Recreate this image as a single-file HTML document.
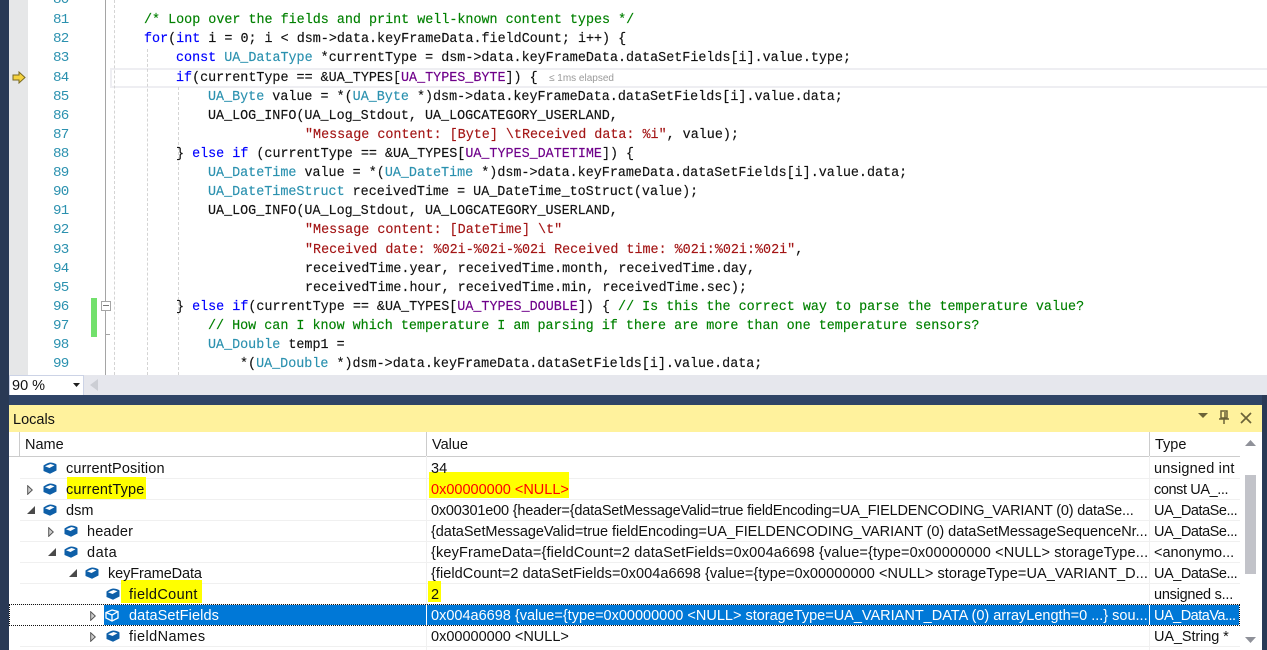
<!DOCTYPE html>
<html><head><meta charset="utf-8"><style>
html,body{margin:0;padding:0}
body{width:1267px;height:650px;overflow:hidden;position:relative;background:#fff}
div,span.a,svg{position:absolute}
.code{font:13.4px/19px "Liberation Mono",monospace;white-space:pre;color:#111;left:0;height:19px;margin-top:1px;-webkit-text-stroke:.15px}
.n{font:14.2px/19px "Liberation Mono",monospace;letter-spacing:-.8px;color:#2b91af;left:53px;height:19px;margin-top:1px}
.k{color:#0000ff}.t{color:#2b91af}.s{color:#a31515}.c{color:#008000}.m{color:#6f008a}
.u{font:14.5px/21px "Liberation Sans",sans-serif;white-space:nowrap;color:#111;height:21px;margin-top:1px}
.r{left:20px;width:1220px;height:1px;background:#f0f0f0}
</style></head><body>
<div style="left:0;top:0;width:9px;height:650px;background:#293955"></div>
<div style="left:9px;top:0;width:19px;height:375px;background:#e6e7e8"></div>
<div style="left:105px;top:0;width:1px;height:375px;background:#a5a5a5"></div>
<div style="left:110px;top:68px;width:1157px;height:16px;border:2px solid #eeeef2;border-right:0"></div>
<div style="left:114px;top:0;height:375px;border-left:1px dashed #d4d4d4"></div>
<div style="left:147px;top:49px;height:326px;border-left:1px dashed #d4d4d4"></div>
<div style="left:178px;top:87px;height:288px;border-left:1px dashed #d4d4d4"></div>
<div style="left:91px;top:298px;width:6px;height:39px;background:#72e06c"></div>
<div style="left:101px;top:301px;width:8px;height:8px;border:1px solid #a5a5a5;background:#fff"></div>
<div style="left:103px;top:305px;width:6px;height:1px;background:#777"></div>
<div style="left:106px;top:334px;width:4px;height:1px;background:#a5a5a5"></div>
<svg style="left:12px;top:71px" width="14" height="13" viewBox="0 0 14 13"><path d="M1 4H7V1L13 6.500 7 12V9H1Z" fill="#f5d33f" stroke="#7a6a20" stroke-width="1"/></svg>

<div class="n" style="top:-10px">80</div><div class="code" style="top:-10px"></div>
<div class="n" style="top:10px">81</div><div class="code" style="top:10px;left:144px"><span class="c">/* Loop over the fields and print well-known content types */</span></div>
<div class="n" style="top:29px">82</div><div class="code" style="top:29px;left:144px"><span class="k">for</span>(<span class="k">int</span> i = 0; i &lt; dsm-&gt;data.keyFrameData.fieldCount; i++) {</div>
<div class="n" style="top:48px">83</div><div class="code" style="top:48px;left:176px"><span class="k">const</span> <span class="t">UA_DataType</span> *currentType = dsm-&gt;data.keyFrameData.dataSetFields[i].value.type;</div>
<div class="n" style="top:68px">84</div><div class="code" style="top:68px;left:176px"><span class="k">if</span>(currentType == &amp;UA_TYPES[<span class="m">UA_TYPES_BYTE</span>]) {</div>
<div class="u" style="left:549px;top:68px;font-size:10px;line-height:20px;color:#9a9a9a">≤ 1ms elapsed</div>
<div class="n" style="top:87px">85</div><div class="code" style="top:87px;left:208px"><span class="t">UA_Byte</span> value = *(<span class="t">UA_Byte</span> *)dsm-&gt;data.keyFrameData.dataSetFields[i].value.data;</div>
<div class="n" style="top:106px">86</div><div class="code" style="top:106px;left:208px">UA_LOG_INFO(UA_Log_Stdout, UA_LOGCATEGORY_USERLAND,</div>
<div class="n" style="top:125px">87</div><div class="code" style="top:125px;left:305px"><span class="s">"Message content: [Byte] \tReceived data: %i"</span>, value);</div>
<div class="n" style="top:144px">88</div><div class="code" style="top:144px;left:176px">} <span class="k">else</span> <span class="k">if</span> (currentType == &amp;UA_TYPES[<span class="m">UA_TYPES_DATETIME</span>]) {</div>
<div class="n" style="top:163px">89</div><div class="code" style="top:163px;left:208px"><span class="t">UA_DateTime</span> value = *(<span class="t">UA_DateTime</span> *)dsm-&gt;data.keyFrameData.dataSetFields[i].value.data;</div>
<div class="n" style="top:182px">90</div><div class="code" style="top:182px;left:208px"><span class="t">UA_DateTimeStruct</span> receivedTime = UA_DateTime_toStruct(value);</div>
<div class="n" style="top:201px">91</div><div class="code" style="top:201px;left:208px">UA_LOG_INFO(UA_Log_Stdout, UA_LOGCATEGORY_USERLAND,</div>
<div class="n" style="top:220px">92</div><div class="code" style="top:220px;left:305px"><span class="s">"Message content: [DateTime] \t"</span></div>
<div class="n" style="top:240px">93</div><div class="code" style="top:240px;left:305px"><span class="s">"Received date: %02i-%02i-%02i Received time: %02i:%02i:%02i"</span>,</div>
<div class="n" style="top:259px">94</div><div class="code" style="top:259px;left:305px">receivedTime.year, receivedTime.month, receivedTime.day,</div>
<div class="n" style="top:278px">95</div><div class="code" style="top:278px;left:305px">receivedTime.hour, receivedTime.min, receivedTime.sec);</div>
<div class="n" style="top:297px">96</div><div class="code" style="top:297px;left:176px">} <span class="k">else</span> <span class="k">if</span>(currentType == &amp;UA_TYPES[<span class="m">UA_TYPES_DOUBLE</span>]) { <span class="c">// Is this the correct way to parse the temperature value?</span></div>
<div class="n" style="top:316px">97</div><div class="code" style="top:316px;left:208px"><span class="c">// How can I know which temperature I am parsing if there are more than one temperature sensors?</span></div>
<div class="n" style="top:335px">98</div><div class="code" style="top:335px;left:208px"><span class="t">UA_Double</span> temp1 =</div>
<div class="n" style="top:354px">99</div><div class="code" style="top:354px;left:240px">*(<span class="t">UA_Double</span> *)dsm-&gt;data.keyFrameData.dataSetFields[i].value.data;</div>

<div style="left:9px;top:375px;width:1258px;height:20px;background:#e6e7ed"></div>
<div style="left:9px;top:375px;width:73px;height:19px;background:#fff;border:1px solid #ccd3e6"></div>
<div class="u" style="left:12px;top:375px;line-height:20px">90 %</div>
<svg style="left:73px;top:383px" width="7" height="4"><path d="M0 0H7L3.500 4Z" fill="#1e1e1e"/></svg>
<svg style="left:90px;top:379px" width="9" height="12"><path d="M8 0V12L0 6Z" fill="#ccced4"/></svg>

<div style="left:9px;top:395px;width:1258px;height:10px;background:#2f4466"></div>
<div style="left:1262px;top:395px;width:5px;height:255px;background:#293955"></div>
<div style="left:9px;top:405px;width:1253px;height:27px;background:#fff29d"></div>
<div class="u" style="left:13px;top:408px;line-height:22px">Locals</div>
<svg style="left:1198px;top:413px" width="12" height="7"><path d="M0 0H10L5 5Z" fill="#6b6338"/></svg>
<svg style="left:1218px;top:410px" width="12" height="15"><path d="M3 1H9V8H3ZM1 9H11M6 9V14M7 2V8" fill="none" stroke="#6b6338" stroke-width="1.500"/></svg>
<svg style="left:1240px;top:412px" width="12" height="12"><path d="M1 1L11 11M11 1L1 11" stroke="#6b6338" stroke-width="1.700"/></svg>

<div style="left:9px;top:432px;width:1231px;height:24px;background:#fff;border-bottom:1px solid #ccc"></div>
<div style="left:19px;top:432px;width:1px;height:24px;background:#ccc"></div>
<div style="left:426px;top:432px;width:1px;height:24px;background:#ccc"></div>
<div style="left:1149px;top:432px;width:1px;height:24px;background:#ccc"></div>
<div class="u" style="left:25px;top:434px">Name</div>
<div class="u" style="left:432px;top:434px">Value</div>
<div class="u" style="left:1155px;top:434px">Type</div>

<div style="left:1240px;top:432px;width:22px;height:218px;background:#fff"></div>
<div style="left:1245px;top:475px;width:11px;height:99px;background:#c2c3c9"></div>
<svg style="left:1245px;top:440px" width="11" height="6"><path d="M0 6L5.500 0 11 6Z" fill="#8f9199"/></svg>
<svg style="left:1245px;top:637px" width="11" height="6"><path d="M0 0L5.500 6 11 0Z" fill="#8f9199"/></svg>

<div class="r" style="top:478px"></div><div class="r" style="top:499px"></div><div class="r" style="top:520px"></div><div class="r" style="top:541px"></div><div class="r" style="top:562px"></div><div class="r" style="top:583px"></div><div class="r" style="top:604px"></div><div class="r" style="top:646px"></div>
<div style="left:426px;top:456px;width:1px;height:194px;background:#f0f0f0"></div>
<div style="left:1149px;top:456px;width:1px;height:194px;background:#f0f0f0"></div>

<div style="left:67px;top:477px;width:79px;height:22px;background:#ffff00"></div>
<div style="left:429px;top:472px;width:140px;height:26px;background:#ffff00"></div>
<div style="left:121px;top:580px;width:81px;height:23px;background:#ffff00"></div>
<div style="left:428px;top:581px;width:13px;height:21px;background:#ffff00"></div>
<div style="left:104px;top:605px;width:1135px;height:20px;background:#0078d7"></div>
<div style="left:9px;top:604px;width:1229px;height:20px;border:1px dotted #111"></div>
<div style="left:426px;top:605px;width:1px;height:20px;background:#fff"></div>
<div style="left:1149px;top:605px;width:1px;height:20px;background:#fff"></div>

<svg width="0" height="0" style="left:0;top:0"><defs>
<symbol id="i" viewBox="0 0 14 12"><path d="M7 .5C9 .5 11 1 13 2 13.500 2.200 13.500 3 13.500 4V8.500L7 11.800 .5 9V3.500C3 1.800 5 .8 7 .5Z" fill="#0e5fa8"/><path d="M2 4.200L7.500 2 11.500 3.200 6.500 6Z" fill="#fff"/></symbol>
<symbol id="w" viewBox="0 0 14 13"><path d="M7 1L13 2.500V9L7 12 1 9V3.500Z M1 3.500L7 6 13 2.500M7 6V12" fill="none" stroke="#fff" stroke-width="1.300"/></symbol>
<symbol id="o" viewBox="0 0 6 10"><path d="M.7 .7L5.300 5 .7 9.300Z" fill="#cfcfcf" stroke="#555"/></symbol>
<symbol id="f" viewBox="0 0 9 9"><path d="M9 0V9H0Z" fill="#4a4a4a"/></symbol>
</defs></svg>
<svg style="left:43px;top:462px" width="14" height="12"><use href="#i"/></svg>
<svg style="left:43px;top:483px" width="14" height="12"><use href="#i"/></svg>
<svg style="left:43px;top:504px" width="14" height="12"><use href="#i"/></svg>
<svg style="left:64px;top:525px" width="14" height="12"><use href="#i"/></svg>
<svg style="left:64px;top:546px" width="14" height="12"><use href="#i"/></svg>
<svg style="left:85px;top:567px" width="14" height="12"><use href="#i"/></svg>
<svg style="left:106px;top:588px" width="14" height="12"><use href="#i"/></svg>
<svg style="left:105px;top:609px" width="14" height="13"><use href="#w"/></svg>
<svg style="left:106px;top:630px" width="14" height="12"><use href="#i"/></svg>
<svg style="left:27px;top:485px" width="6" height="10"><use href="#o"/></svg>
<svg style="left:48px;top:527px" width="6" height="10"><use href="#o"/></svg>
<svg style="left:90px;top:611px" width="6" height="10"><use href="#o"/></svg>
<svg style="left:90px;top:632px" width="6" height="10"><use href="#o"/></svg>
<svg style="left:27px;top:506px" width="8" height="8"><use href="#f"/></svg>
<svg style="left:48px;top:548px" width="8" height="8"><use href="#f"/></svg>
<svg style="left:69px;top:569px" width="8" height="8"><use href="#f"/></svg>

<div class="u" style="left:66px;top:458px;letter-spacing:.13px">currentPosition</div>
<div class="u" style="left:66px;top:479px;letter-spacing:.18px">currentType</div>
<div class="u" style="left:66px;top:500px">dsm</div>
<div class="u" style="left:87px;top:521px;letter-spacing:.15px">header</div>
<div class="u" style="left:87px;top:542px;letter-spacing:.5px">data</div>
<div class="u" style="left:108px;top:563px;letter-spacing:-.1px">keyFrameData</div>
<div class="u" style="left:129px;top:584px;letter-spacing:.35px">fieldCount</div>
<div class="u" style="left:129px;top:605px;color:#fff;letter-spacing:.1px">dataSetFields</div>
<div class="u" style="left:129px;top:626px;letter-spacing:.4px">fieldNames</div>

<div class="u" style="left:431px;top:458px">34</div>
<div class="u" style="left:431px;top:479px;color:#f00">0x00000000 &lt;NULL&gt;</div>
<div class="u" style="left:431px;top:500px;letter-spacing:-.19px">0x00301e00 {header={dataSetMessageValid=true fieldEncoding=UA_FIELDENCODING_VARIANT (0) dataSe...</div>
<div class="u" style="left:431px;top:521px;letter-spacing:-.05px">{dataSetMessageValid=true fieldEncoding=UA_FIELDENCODING_VARIANT (0) dataSetMessageSequenceNr...</div>
<div class="u" style="left:431px;top:542px;letter-spacing:.15px">{keyFrameData={fieldCount=2 dataSetFields=0x004a6698 {value={type=0x00000000 &lt;NULL&gt; storageType...</div>
<div class="u" style="left:431px;top:563px;letter-spacing:.06px">{fieldCount=2 dataSetFields=0x004a6698 {value={type=0x00000000 &lt;NULL&gt; storageType=UA_VARIANT_D...</div>
<div class="u" style="left:431px;top:584px">2</div>
<div class="u" style="left:431px;top:605px;color:#fff">0x004a6698 {value={type=0x00000000 &lt;NULL&gt; storageType=UA_VARIANT_DATA (0) arrayLength=0 ...} sou...</div>
<div class="u" style="left:431px;top:626px">0x00000000 &lt;NULL&gt;</div>

<div class="u" style="left:1154px;top:458px;letter-spacing:.2px">unsigned int</div>
<div class="u" style="left:1154px;top:479px;letter-spacing:-.4px">const UA_...</div>
<div class="u" style="left:1154px;top:500px;letter-spacing:-.45px">UA_DataSe...</div>
<div class="u" style="left:1154px;top:521px;letter-spacing:-.45px">UA_DataSe...</div>
<div class="u" style="left:1154px;top:542px">&lt;anonymo...</div>
<div class="u" style="left:1154px;top:563px;letter-spacing:-.45px">UA_DataSe...</div>
<div class="u" style="left:1154px;top:584px;letter-spacing:-.25px">unsigned s...</div>
<div class="u" style="left:1154px;top:605px;color:#fff;letter-spacing:-.5px">UA_DataVa...</div>
<div class="u" style="left:1154px;top:626px;letter-spacing:-.1px">UA_String *</div>
</body></html>
